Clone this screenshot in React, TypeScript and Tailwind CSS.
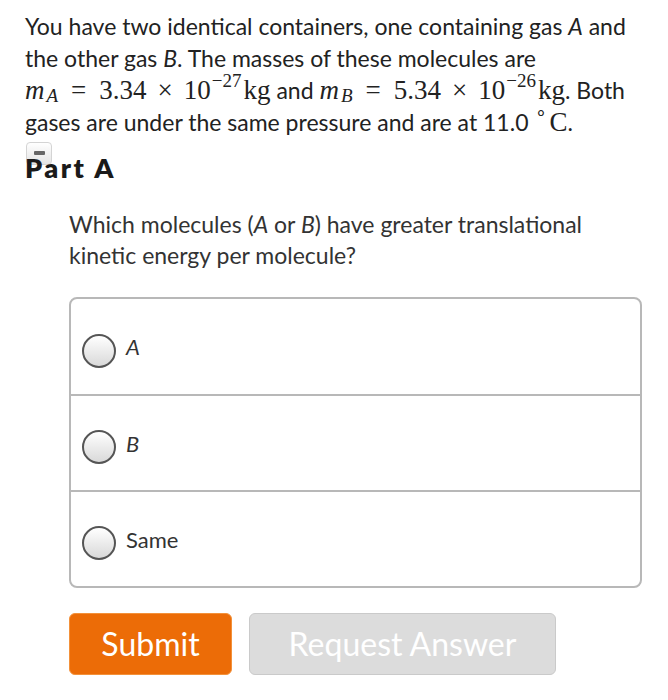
import React from 'react'

const sans = { fontFamily: 'Lato, "Open Sans", sans-serif' }

const M = ({ children }: { children: React.ReactNode }) => (
  <span className="font-['Liberation_Serif',serif] text-[27px] leading-none">{children}</span>
)

const Sup = ({ children }: { children: React.ReactNode }) => (
  <span className="relative -top-[12px] ml-[1px] mr-[2px] text-[19px] leading-none">{children}</span>
)

const Sub = ({ children }: { children: React.ReactNode }) => (
  <i className="relative top-[3px] ml-[2px] text-[19px] leading-none">{children}</i>
)

const Eq = () => <span className="mx-[13px]">=</span>
const Times = () => <span className="mx-[11px]">×</span>

const Radio = () => (
  <span className="mt-2 h-[34px] w-[34px] shrink-0 rounded-full border-2 border-[#555] bg-gradient-to-b from-white to-[#d9d9d9]" />
)

const options = [
  { label: 'A', italic: true, h: 'h-[95px]' },
  { label: 'B', italic: true, h: 'h-[96px] border-t-2 border-[#b8b8b8]' },
  { label: 'Same', italic: false, h: 'h-[96px] border-t-2 border-[#b8b8b8]' },
]

export default function App() {
  return (
    <div className="min-h-[700px] w-[668px] bg-white px-[25px] pt-[10px] text-[#222]" style={sans}>
      <div className="whitespace-nowrap text-[23px] leading-[32px]">
        <div>
          You have two identical containers, one containing gas <i>A</i> and
        </div>
        <div>
          the other gas <i>B</i>. The masses of these molecules are
        </div>
        <div>
          <M>
            <i>m</i>
            <Sub>A</Sub>
            <Eq />3.34<Times />10<Sup>−27</Sup>kg
          </M>{' '}
          and{' '}
          <M>
            <i>m</i>
            <Sub>B</Sub>
            <Eq />5.34<Times />10<Sup>−26</Sup>kg
          </M>
          . Both
        </div>
        <div>
          gases are under the same pressure and are at 11.0{' '}
          <M>
            <Sup>∘</Sup>C
          </M>
          .
        </div>
      </div>

      <div className="relative mt-[15px]">
        <span className="absolute -top-[11px] left-[1px] flex h-[23px] w-[26px] items-center justify-center rounded-[4px] border border-[#d4d4d4] bg-gradient-to-b from-white to-[#e4e4e4]">
          <span className="-mt-[2px] h-[4px] w-[11px] rounded-[1px] bg-[#666]" />
        </span>
        <h2 className="relative text-[27px] font-extrabold leading-[30px] tracking-[2.5px] text-[#1a1a1a]">Part A</h2>
      </div>

      <div className="pl-[44px]">
        <p className="mt-[26px] whitespace-nowrap text-[23px] leading-[31px] text-[#333]">
          Which molecules (<i>A</i> or <i>B</i>) have greater translational
          <br />
          kinetic energy per molecule?
        </p>

        <div className="mt-[26px] w-[573px] rounded-[8px] border-2 border-[#b8b8b8]">
          {options.map((o) => (
            <div key={o.label} className={`flex items-center gap-[10px] px-[11px] ${o.h}`}>
              <Radio />
              <span className={`text-[22px] text-[#333] ${o.italic ? 'italic' : ''}`}>{o.label}</span>
            </div>
          ))}
        </div>

        <div className="mt-[25px] flex gap-[17px]">
          <button className="flex h-[62px] w-[163px] items-center justify-center rounded-[6px] border border-[#f3913a] bg-[#ec6c07] text-[32px] text-white">
            Submit
          </button>
          <button className="flex h-[62px] w-[307px] items-center justify-center rounded-[6px] border border-[#cacaca] bg-[#dcdcdc] text-[32px] text-white">
            Request Answer
          </button>
        </div>
      </div>
    </div>
  )
}
